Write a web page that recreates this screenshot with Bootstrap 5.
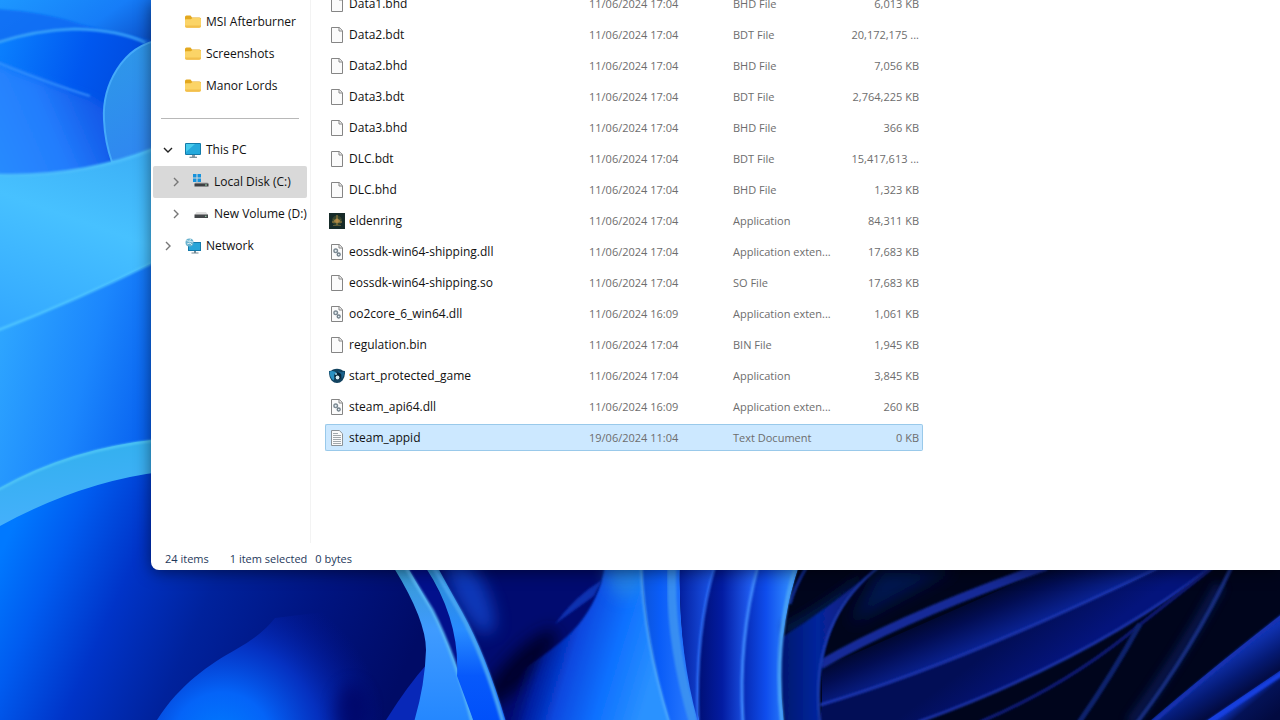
<!DOCTYPE html>
<html lang="en">
<head>
<meta charset="utf-8">
<meta name="viewport" content="width=device-width, initial-scale=1">
<title>File Explorer</title>
<link href="https://cdn.jsdelivr.net/npm/bootstrap@5.3.0/dist/css/bootstrap.min.css" rel="stylesheet">
<style>
  body { font-family: "Open Sans", "Noto Sans", sans-serif; font-size: 12px; line-height: 16px; color: #1b1b1b; }
  .desktop { padding: 0 0 150px 151px; background: #00051c; }
  .wallpaper { inset: 0; }
  .explorer { border-bottom-left-radius: 8px; box-shadow: 0 2px 16px rgba(0, 0, 0, .5); }
  .side { width: 160px; padding: 6px 3px 0 2px; border-right: 1px solid #f3f3f3; margin-bottom: 5px; }
  .side a { height: 32px; gap: 5px; color: #111; padding-left: 32px; border-radius: 2px; white-space: nowrap; }
  .side a.branch { padding-left: 9px; gap: 11px; }
  .side a.leafy { padding-left: 17px; gap: 11px; }
  .side a.active { background: #d9d9d9; }
  .side .tag { gap: 5px; }
  .side hr { margin: 16px 8px 15px; border-color: #888; opacity: .6; }
  .side svg, .files svg { width: 16px; height: 16px; flex: none; }
  .side .chev { width: 12px; height: 12px; fill: none; stroke: #777; stroke-width: 1.4; }
  .side .chev.open { stroke: #222; }
  .files { padding: 0 0 93px 14px; }
  .files table { width: 598px; table-layout: fixed; border-collapse: separate; border-spacing: 0 4px; }
  .files td { height: 27px; padding: 0 4px 0 6px; border: solid transparent; border-width: 1px 0; color: #6d6d6d; font-size: 11px; }
  .files td:first-child { color: #111; font-size: 12px; padding-left: 4px; }
  .files .picked td { background: #cce8ff; border-color: #99c9ea; }
  .files .picked td:first-child { border-left-width: 1px; border-radius: 2px 0 0 2px; padding-left: 3px; }
  .files .picked td:last-child { border-right-width: 1px; border-radius: 0 2px 2px 0; padding-right: 3px; }
  .col-name { width: 258px; } .col-date { width: 144px; } .col-type { width: 114px; }
  .status { height: 22px; gap: 8px; padding-left: 14px; font-size: 11px; color: #1e395b; }
  .status .total { margin-right: 13px; }
</style>
</head>
<body>
<div class="desktop position-relative vh-100 overflow-hidden d-flex">
  <svg class="wallpaper position-absolute w-100 h-100" viewBox="0 0 1280 720" preserveAspectRatio="xMinYMin slice" fill="none" aria-hidden="true">
    <defs>
      <filter id="b2" x="-20%" y="-20%" width="140%" height="140%"><feGaussianBlur stdDeviation="1"/></filter>
      <filter id="b4" x="-30%" y="-30%" width="160%" height="160%"><feGaussianBlur stdDeviation="4"/></filter>
      <filter id="b8" x="-50%" y="-50%" width="200%" height="200%"><feGaussianBlur stdDeviation="8"/></filter>
      <linearGradient id="top" x1="0" y1="0" x2="1" y2=".5"><stop stop-color="#1d97ff"/><stop offset=".6" stop-color="#167df8"/><stop offset="1" stop-color="#0b4fc8"/></linearGradient>
      <linearGradient id="fold1" x1="0" y1="0" x2="1" y2=".3"><stop stop-color="#0b82ff"/><stop offset=".5" stop-color="#0058f0"/><stop offset="1" stop-color="#0044d4"/></linearGradient>
      <linearGradient id="fold2" x1="0" y1="1" x2="1" y2=".6"><stop stop-color="#2b92ff"/><stop offset=".65" stop-color="#237dfd"/><stop offset="1" stop-color="#1259e8"/></linearGradient>
      <linearGradient id="disc" x1="0" y1="0" x2=".3" y2="1"><stop stop-color="#2e9ae8"/><stop offset="1" stop-color="#2f88f0"/></linearGradient>
      <linearGradient id="sky" x1=".6" y1="0" x2=".3" y2="1"><stop stop-color="#3cb0f6"/><stop offset=".4" stop-color="#47c1ff"/><stop offset="1" stop-color="#33a8ff"/></linearGradient>
      <linearGradient id="low" x1="0" y1=".3" x2="1" y2=".7"><stop stop-color="#2ea6ff"/><stop offset=".5" stop-color="#1b86fd"/><stop offset="1" stop-color="#0358ec"/></linearGradient>
      <linearGradient id="band" x1="0" y1="0" x2=".2" y2="1"><stop stop-color="#30b0ec"/><stop offset="1" stop-color="#45b0fc"/></linearGradient>
      <linearGradient id="deep" gradientUnits="userSpaceOnUse" x1="20" y1="510" x2="400" y2="680"><stop stop-color="#0079ff"/><stop offset=".13" stop-color="#005cf0"/><stop offset=".3" stop-color="#0034c8"/><stop offset=".5" stop-color="#00229c"/><stop offset=".75" stop-color="#001480"/><stop offset="1" stop-color="#000b66"/></linearGradient>
      <radialGradient id="petal" gradientUnits="userSpaceOnUse" cx="222" cy="742" r="165"><stop stop-color="#007dff"/><stop offset=".3" stop-color="#0464f8"/><stop offset=".6" stop-color="#0636cc" stop-opacity=".85"/><stop offset="1" stop-color="#04149a" stop-opacity="0"/></radialGradient>
      <linearGradient id="rib1" x1="0" y1="0" x2="0" y2="1"><stop stop-color="#3699d0"/><stop offset=".4" stop-color="#3f9bff"/><stop offset="1" stop-color="#2487ff"/></linearGradient>
      <linearGradient id="rib2" x1="0" y1="0" x2="0" y2="1"><stop stop-color="#318ed0"/><stop offset=".4" stop-color="#288cff"/><stop offset=".7" stop-color="#0759fb"/><stop offset="1" stop-color="#0050fa"/></linearGradient>
      <linearGradient id="big" gradientUnits="userSpaceOnUse" x1="526" y1="652" x2="650" y2="690"><stop stop-color="#001480" stop-opacity="0"/><stop offset=".15" stop-color="#0528b8" stop-opacity=".7"/><stop offset=".35" stop-color="#0848df"/><stop offset=".65" stop-color="#0d70ff"/><stop offset="1" stop-color="#2b92ff"/></linearGradient>
      <linearGradient id="r4" gradientUnits="userSpaceOnUse" x1="645" y1="0" x2="695" y2="0"><stop stop-color="#0b55df"/><stop offset=".3" stop-color="#0a5df8"/><stop offset="1" stop-color="#2c7dff"/></linearGradient>
      <linearGradient id="r5" gradientUnits="userSpaceOnUse" x1="680" y1="0" x2="714" y2="0"><stop stop-color="#0420a0"/><stop offset="1" stop-color="#1c58ee"/></linearGradient>
      <linearGradient id="r6" gradientUnits="userSpaceOnUse" x1="698" y1="0" x2="752" y2="0"><stop stop-color="#000f75"/><stop offset=".45" stop-color="#031ca2"/><stop offset="1" stop-color="#2160f6"/></linearGradient>
      <linearGradient id="r7" gradientUnits="userSpaceOnUse" x1="742" y1="0" x2="790" y2="0"><stop stop-color="#0628b0"/><stop offset=".5" stop-color="#0f4ded"/><stop offset="1" stop-color="#2f89ff"/></linearGradient>
      <linearGradient id="r8" gradientUnits="userSpaceOnUse" x1="782" y1="0" x2="860" y2="0"><stop stop-color="#051770"/><stop offset=".45" stop-color="#06259c"/><stop offset="1" stop-color="#0a1f78"/></linearGradient>
      <linearGradient id="s2" gradientUnits="userSpaceOnUse" x1="960" y1="600" x2="982" y2="650"><stop stop-color="#000625"/><stop offset=".4" stop-color="#020d52"/><stop offset="1" stop-color="#0a2499"/></linearGradient>
      <linearGradient id="s3" gradientUnits="userSpaceOnUse" x1="1010" y1="636" x2="1040" y2="677"><stop stop-color="#020e56"/><stop offset="1" stop-color="#04147c"/></linearGradient>
      <linearGradient id="s7" gradientUnits="userSpaceOnUse" x1="1220" y1="660" x2="1244" y2="698"><stop stop-color="#1033b4"/><stop offset=".5" stop-color="#051a74"/><stop offset="1" stop-color="#020836"/></linearGradient>
      <linearGradient id="s8" gradientUnits="userSpaceOnUse" x1="1245" y1="690" x2="1270" y2="720"><stop stop-color="#1440e0"/><stop offset=".4" stop-color="#041257"/><stop offset="1" stop-color="#020a40"/></linearGradient>
    </defs>

    <!-- left side folds -->
    <path fill="url(#top)" d="M0 0H170V60H0z"/>
    <path fill="#0865f2" opacity=".7" filter="url(#b2)" d="M-4 9Q45 12 80 24L151 40V60H-4z"/>
    <path fill="url(#fold1)" d="M0 42Q35 30 75 29Q120 30 146 42L170 120V180H0z"/>
    <path stroke="#3ba4fa" stroke-width="2.5" filter="url(#b2)" d="M-4 43Q35 30 75 29Q120 30 146 43"/>
    <path fill="url(#fold2)" filter="url(#b4)" d="M-30 60L0 66L92 99Q102 106 112 110V190H-30z"/>
    <path stroke="#3c98ff" stroke-width="1.5" filter="url(#b2)" d="M-4 62Q50 84 90 96"/>
    <path fill="url(#disc)" stroke="#45aafa" stroke-width="2" d="M160 40C122 46 102 86 104 120Q105 142 112 162L160 160z"/>
    <path fill="url(#sky)" d="M0 175Q80 178 151 149L170 142V270L0 340z"/>
    <path stroke="#4cbefc" stroke-width="3" filter="url(#b2)" d="M-4 175Q80 178 154 149"/>
    <path fill="url(#low)" d="M0 330Q75 301 170 254V500H0z"/>
    <path stroke="#50c6ff" stroke-width="2.5" filter="url(#b2)" d="M-4 331Q75 301 156 261"/>

    <!-- lower left -->
    <path fill="url(#deep)" d="M0 520Q80 482 160 470H560V720H0z"/>
    <path fill="url(#band)" d="M-2 489Q70 448 160 439V472Q80 482 -2 527z"/>
    <path stroke="#55cbf8" stroke-width="2" filter="url(#b2)" d="M-2 490Q70 449 160 440"/>
    <path fill="url(#petal)" d="M157 720C180 684 210 664 235 650Q262 635 275 618L420 600V720z"/>

    <!-- center ribbons -->
    <ellipse cx="352" cy="712" rx="16" ry="28" fill="#00055c" opacity=".6" filter="url(#b8)"/>
    <path fill="#0828b8" d="M386 720Q408 685 427 664V720z"/>
    <path fill="#010b70" d="M405 560H650L690 720H470z"/>
    <ellipse cx="470" cy="592" rx="16" ry="46" fill="#1757e8" opacity=".6" filter="url(#b8)" transform="rotate(-26 470 592)"/>
    <ellipse cx="520" cy="668" rx="14" ry="52" fill="#00002c" filter="url(#b8)" transform="rotate(44 520 668)"/>
    <path fill="#02108c" d="M406 570H428L452 618Q458 645 457 674z"/>
    <path fill="url(#rib1)" d="M394 568Q426 620 426 650Q425 685 414 722H474Q455 655 432 610L408 568z"/>
    <path stroke="#59b6f5" stroke-width="3" filter="url(#b2)" d="M406 568L432 610Q455 655 472 722"/>
    <path fill="url(#big)" filter="url(#b2)" d="M605 566Q599 600 578 625T490 690V730H674Q644 640 641 566z"/>
    <path fill="url(#rib2)" d="M426 568Q460 620 457 676L474 722H506Q486 655 462 612L438 568z"/>
    <path stroke="#48a5f2" stroke-width="4" filter="url(#b2)" d="M434 568L460 612Q484 655 503 722"/>
    <path fill="#1130b0" filter="url(#b2)" d="M555 624Q575 596 602 580L594 596z"/>
    <ellipse cx="626" cy="570" rx="20" ry="28" fill="#3695d8" opacity=".5" filter="url(#b8)"/>
    <path fill="url(#r4)" d="M642 566H680Q678 650 700 722H670Q645 640 642 566z"/>
    <path stroke="#4097f0" stroke-width="9" opacity=".8" filter="url(#b2)" d="M672 566Q669 640 694 724"/>
    <path stroke="#4aa5ff" stroke-width="2.5" filter="url(#b2)" d="M641 566Q644 640 669 722"/>
    <path fill="url(#r5)" d="M680 566H716Q696 630 698 722Q678 650 680 566z"/>
    <path fill="url(#r6)" d="M715 566H760Q738 640 744 722H699Q694 630 715 566z"/>
    <path fill="url(#r7)" d="M759 566H799Q774 640 784 722H744Q737 640 759 566z"/>
    <path stroke="#2d6ef6" stroke-width="2.5" filter="url(#b2)" d="M715 566Q695 630 698 722"/>
    <path stroke="#3e86fb" stroke-width="3" filter="url(#b2)" d="M758 566Q738 640 743 722"/>
    <path fill="#00051c" d="M799 566H1290V722H784Q774 640 799 566z"/>

    <!-- right strands -->
    <path fill="#06174f" filter="url(#b8)" d="M880 568H955L850 624z"/>
    <path fill="url(#s2)" d="M822 705Q960 662 1162 568H1050L822 668z"/>
    <path fill="url(#s3)" d="M822 705Q960 662 1162 568H1212Q1090 660 918 722H820z"/>
    <path stroke="#142c98" stroke-width="9" filter="url(#b2)" d="M820 665Q900 618 1046 566"/>
    <path stroke="#1c35ae" stroke-width="3" filter="url(#b2)" d="M820 705Q960 664 1162 566"/>
    <path stroke="#1a31a4" stroke-width="3" filter="url(#b2)" d="M918 722Q1090 660 1210 568"/>
    <path stroke="#101f78" stroke-width="3" filter="url(#b2)" d="M980 722Q1070 684 1142 623L1212 568"/>
    <path stroke="#0e246e" stroke-width="5" filter="url(#b2)" d="M1078 724Q1112 675 1140 624"/>
    <path stroke="#0c2169" stroke-width="11" opacity=".6" filter="url(#b4)" d="M1130 724Q1178 660 1220 585"/>
    <path stroke="#152d80" stroke-width="4" filter="url(#b2)" d="M1136 724Q1192 650 1232 566"/>
    <path fill="url(#s7)" d="M1149 722Q1210 670 1290 608V665L1205 722z"/>
    <path fill="url(#s8)" d="M1205 722L1290 664V722z"/>
    <path stroke="#1433b0" stroke-width="4" filter="url(#b2)" d="M1151 724Q1210 672 1290 610"/>
    <path stroke="#163fe0" stroke-width="5" filter="url(#b2)" d="M1206 724L1290 668"/>

    <!-- ribbon that crosses the strands -->
    <path fill="#05143f" filter="url(#b4)" d="M784 624Q826 602 862 572L852 590L790 650z"/>
    <path fill="url(#r8)" filter="url(#b2)" d="M781 638Q832 606 878 566Q812 620 820 724H785Q777 670 781 638z"/>
    <path stroke="#2340b8" stroke-width="2" filter="url(#b2)" d="M880 566Q808 622 820 722"/>
    <path stroke="#122d99" stroke-width="3" filter="url(#b2)" d="M806 568Q794 588 790 604"/>
    <path stroke="#47a0f5" stroke-width="4" filter="url(#b2)" d="M796 566Q773 640 782 722"/>

    <!-- file icons -->
    <symbol id="page" viewBox="0 0 16 16"><path d="M2.500.5h7.800l3.200 3.200v11.800h-11z" fill="#fbfbfb" stroke="#858585"/><path d="M10 .5v3.500h3.500" fill="none" stroke="#858585"/></symbol>
    <symbol id="gear" viewBox="0 0 16 16"><path d="M2.500.5h7.800l3.200 3.200v11.800h-11z" fill="#fbfbfb" stroke="#858585"/><path d="M10 .5v3.500h3.500" fill="none" stroke="#858585"/><circle cx="6.700" cy="6.800" r="1.800" fill="#e4edf2" stroke="#7d8a93" stroke-width="1.400"/><circle cx="9.700" cy="10.500" r="1.500" fill="#e4edf2" stroke="#6f7e88" stroke-width="1.300"/></symbol>
    <symbol id="text" viewBox="0 0 16 16"><path d="M2.500.5h7.800l3.200 3.200v11.800h-11z" fill="#fbfbfb" stroke="#8b9297"/><path d="M4 3.500h5M4 5.500h8M4 7.500h8M4 9.500h8M4 11.500h8M4 13.500h8" stroke="#a2a8ac"/></symbol>
    <symbol id="elden" viewBox="0 0 16 16"><path fill="#172b29" d="M0 0h16v16H0z"/><circle cx="8" cy="7.500" r="5" fill="#34442e"/><path d="M8 2v11M5 6.500a3 3 0 0 0 6 0M3 9h10" stroke="#a58643" fill="none"/><circle cx="8" cy="7.500" r="2" fill="#b28a45"/><path d="M4 12.500h8" stroke="#5a5a34"/></symbol>
    <symbol id="eac" viewBox="0 0 16 16"><path d="M0 3Q2 3 4 1.500Q8 0 12 1.500Q14 3 16 3Q16.300 9 13.500 12.500Q11 15 8 15T2.500 12.500Q-.3 9 0 3z" fill="#12425f"/><path d="M.5 3.500q4-1.500 7 1l-3 8q-4-3-4-9z" fill="#2b91c3"/><path d="M9 3q3 2 6.500.5 0 4-2.500 7z" fill="#1b638d"/><circle cx="8.800" cy="8" r="3.600" fill="#082437"/><circle cx="8.500" cy="9.500" r="1.900" fill="#d9edf5"/><circle cx="7" cy="6" r="1" fill="#a5d5e8"/></symbol>
    <symbol id="folder" viewBox="0 0 16 16"><path d="M0 3q0-1.500 1.500-1.500h4L7 3.500h7.500q1.500 0 1.500 1.500v5H0z" fill="#e3a81f"/><path d="M0 6q0-.8.8-.8h5L7.500 4h7q1.500 0 1.500 1.500V12q0 1.800-1.800 1.800H1.800Q0 13.800 0 12z" fill="#fbd467"/><path d="M0 12q0 1.800 1.800 1.800h12.400Q16 13.800 16 12v-.5H0z" fill="#f2bf4c"/></symbol>
  </svg>

  <main class="explorer position-relative flex-grow-1 d-flex flex-column bg-white overflow-hidden">
    <div class="d-flex flex-grow-1 overflow-hidden">
      <nav class="side flex-shrink-0" aria-label="Folders">
        <a href="#" class="d-flex align-items-center text-decoration-none"><svg><use href="#folder"/></svg>MSI Afterburner</a>
        <a href="#" class="d-flex align-items-center text-decoration-none"><svg><use href="#folder"/></svg>Screenshots</a>
        <a href="#" class="d-flex align-items-center text-decoration-none"><svg><use href="#folder"/></svg>Manor Lords</a>
        <hr>
        <a href="#" class="branch d-flex align-items-center text-decoration-none"><svg class="chev open" viewBox="0 0 12 12"><path d="M2 4l4 4 4-4"/></svg><span class="tag d-flex align-items-center"><svg viewBox="0 0 16 16"><path d="M7 12h3v3H7z" fill="#8a9aa5"/><path d="M4.500 15.300h7.500" stroke="#738894" stroke-width="1.200"/><rect y="1" width="16" height="12" rx="1" fill="#137ba9"/><path d="M1 2h14v10H1z" fill="#25a9dc"/><path d="M1 2h9L1 10z" fill="#47cbed"/></svg>This PC</span></a>
        <a href="#" class="leafy active d-flex align-items-center text-decoration-none"><svg class="chev" viewBox="0 0 12 12"><path d="M4 2l4 4-4 4"/></svg><span class="tag d-flex align-items-center"><svg viewBox="0 0 16 16"><path d="M0 0h3.500v3.500H0zM4.500 0H8v3.500H4.500zM0 4.500h3.500V8H0zM4.500 4.500H8V8H4.500z" fill="#1692dc"/><path d="M2.500 8.500h12l1 2h-14z" fill="#aaa"/><path d="M1.500 9.500h14V12.500h-14z" fill="#3d3f42"/><path d="M12 11h2" stroke="#9edcb1"/></svg>Local Disk (C:)</span></a>
        <a href="#" class="leafy d-flex align-items-center text-decoration-none"><svg class="chev" viewBox="0 0 12 12"><path d="M4 2l4 4-4 4"/></svg><span class="tag d-flex align-items-center"><svg viewBox="0 0 16 16"><path d="M3.500 6h9.500l2 3h-13.500z" fill="#dedede"/><path d="M1.500 8.500h13.500V12H1.500z" fill="#44474a"/><path d="M12 10.300h1.500" stroke="#9edcb1"/></svg>New Volume (D:)</span></a>
        <a href="#" class="branch d-flex align-items-center text-decoration-none"><svg class="chev" viewBox="0 0 12 12"><path d="M4 2l4 4-4 4"/></svg><span class="tag d-flex align-items-center"><svg viewBox="0 0 16 16"><path d="M9 12h2v3H9zM6.500 14.500h7v1h-7z" fill="#738894"/><path d="M3 4h13v9H3z" fill="#1479aa"/><path d="M4 5h11v7H4z" fill="#27a4d8"/><circle cx="4.500" cy="4.500" r="4" fill="#6bb3cf"/><path d="M1.500 2.500l3 1 1-2.500M2 6l3-1 2 2M5 3.500l3 .5" stroke="#d8edf3" fill="none"/></svg>Network</span></a>
      </nav>
      <section class="files flex-grow-1 d-flex flex-column justify-content-end overflow-hidden" aria-label="Files">
        <table class="text-nowrap">
          <colgroup><col class="col-name"><col class="col-date"><col class="col-type"><col></colgroup>
          <tbody id="rows"></tbody>
        </table>
      </section>
    </div>
    <footer class="status d-flex align-items-center flex-shrink-0">
      <span class="total">24 items</span><span>1 item selected</span><span>0 bytes</span>
    </footer>
  </main>
</div>
<script src="https://cdn.jsdelivr.net/npm/bootstrap@5.3.0/dist/js/bootstrap.bundle.min.js"></script>
<script>
  const files = [
    ["page", "Data1.bhd", "11/06/2024 17:04", "BHD File", "6,013 KB"],
    ["page", "Data2.bdt", "11/06/2024 17:04", "BDT File", "20,172,175 ..."],
    ["page", "Data2.bhd", "11/06/2024 17:04", "BHD File", "7,056 KB"],
    ["page", "Data3.bdt", "11/06/2024 17:04", "BDT File", "2,764,225 KB"],
    ["page", "Data3.bhd", "11/06/2024 17:04", "BHD File", "366 KB"],
    ["page", "DLC.bdt", "11/06/2024 17:04", "BDT File", "15,417,613 ..."],
    ["page", "DLC.bhd", "11/06/2024 17:04", "BHD File", "1,323 KB"],
    ["elden", "eldenring", "11/06/2024 17:04", "Application", "84,311 KB"],
    ["gear", "eossdk-win64-shipping.dll", "11/06/2024 17:04", "Application exten...", "17,683 KB"],
    ["page", "eossdk-win64-shipping.so", "11/06/2024 17:04", "SO File", "17,683 KB"],
    ["gear", "oo2core_6_win64.dll", "11/06/2024 16:09", "Application exten...", "1,061 KB"],
    ["page", "regulation.bin", "11/06/2024 17:04", "BIN File", "1,945 KB"],
    ["eac", "start_protected_game", "11/06/2024 17:04", "Application", "3,845 KB"],
    ["gear", "steam_api64.dll", "11/06/2024 16:09", "Application exten...", "260 KB"],
    ["text", "steam_appid", "19/06/2024 11:04", "Text Document", "0 KB"]
  ];
  document.getElementById("rows").innerHTML = files.map(([icon, name, date, type, size]) =>
    `<tr class="${name === "steam_appid" ? "picked" : ""}">
      <td><div class="d-flex align-items-center gap-1"><svg><use href="#${icon}"/></svg>${name}</div></td>
      <td>${date}</td><td>${type}</td><td class="text-end">${size}</td></tr>`).join("");
</script>
</body>
</html>
